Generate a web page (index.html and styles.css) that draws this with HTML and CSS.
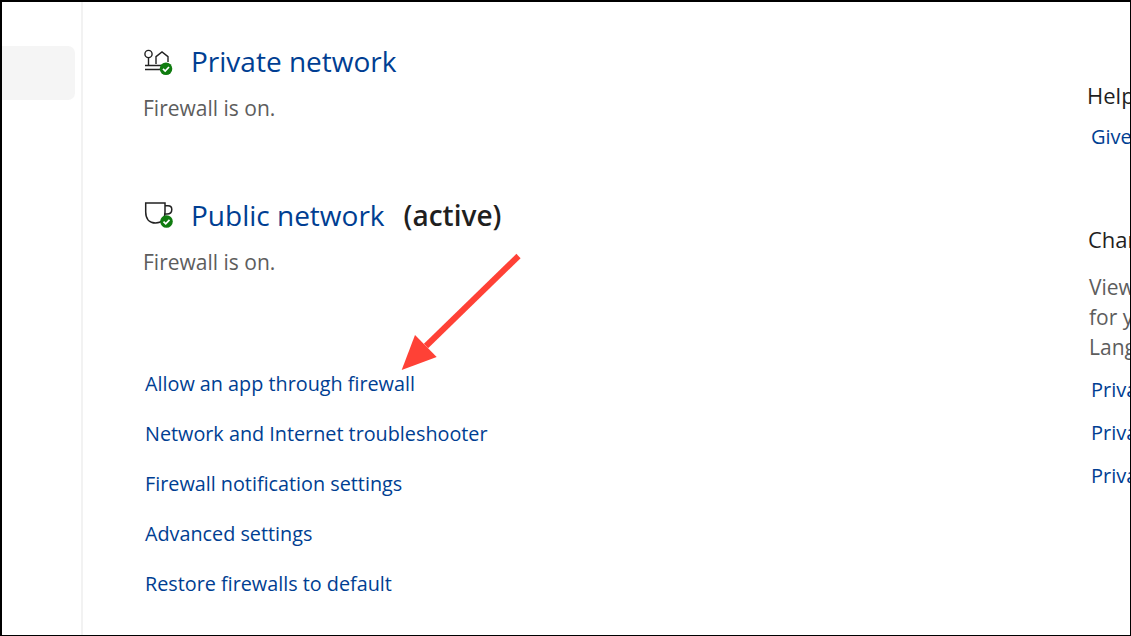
FILE: index.html
```html
<!DOCTYPE html>
<html lang="en">
<head>
<meta charset="utf-8">
<title>Firewall</title>
<link rel="stylesheet" href="styles.css">
</head>
<body>
<div class="frame">
  <aside class="sidebar"><div class="nav-item"></div></aside>
  <main class="main">
    <section class="network">
      <div class="net-head">
        <svg class="net-icon" width="30" height="30" viewBox="0 0 30 30" fill="none" stroke="#222" stroke-width="1.4">
          <circle cx="5.500" cy="8" r="3.600"/>
          <path d="M5.500 11.600V19.500"/>
          <path d="M13 18V10.700L19 6L25 10.700V16"/>
          <path d="M2 19.500H18M2 23.500H17"/>
          <circle cx="23" cy="22.700" r="6.300" fill="#107c10" stroke="none"/>
          <path d="M20 22.800L22.200 25L26 21" stroke="#fff" stroke-width="1.700"/>
        </svg>
        <a class="net-title">Private network</a>
      </div>
      <p class="status">Firewall is on.</p>
    </section>
    <section class="network">
      <div class="net-head">
        <svg class="net-icon" width="30" height="30" viewBox="0 0 30 30" fill="none" stroke="#222" stroke-width="1.500">
          <path d="M2.700 3H22V12C22 19 18.500 23 12.500 23C6.500 23 2.700 19 2.700 12Z"/>
          <path d="M22 5.800H25C27.500 5.800 28.800 7.300 28.800 9.500C28.800 12 27 14 24 14H21.500"/>
          <circle cx="23.500" cy="21.500" r="6.300" fill="#107c10" stroke="none"/>
          <path d="M20.500 21.600L22.700 23.800L26.500 19.800" stroke="#fff" stroke-width="1.700"/>
        </svg>
        <a class="net-title">Public network</a>
        <span class="active">(active)</span>
      </div>
      <p class="status">Firewall is on.</p>
    </section>
    <nav class="links">
      <a>Allow an app through firewall</a>
      <a>Network and Internet troubleshooter</a>
      <a>Firewall notification settings</a>
      <a>Advanced settings</a>
      <a>Restore firewalls to default</a>
    </nav>
  </main>
  <aside class="side">
    <h2 class="side-title help">Help from the web</h2>
    <a class="side-link give">Give feedback</a>
    <h2 class="side-title change">Change your privacy settings</h2>
    <p class="side-text">View and change privacy settings<br>for your Windows 11 device<br>Language settings</p>
    <a class="side-link">Privacy settings</a>
    <a class="side-link">Privacy dashboard</a>
    <a class="side-link">Privacy statement</a>
  </aside>
  <svg class="arrow" width="130" height="125" viewBox="0 0 130 125">
    <path d="M118.500 4L26 94" stroke="#ff4136" stroke-width="6" fill="none"/>
    <path d="M1.700 118L15 83L36.700 105Z" fill="#ff4136" stroke="none"/>
  </svg>
</div>
</body>
</html>
```
FILE: styles.css
```css
* { box-sizing: border-box; }
html, body { margin: 0; height: 100%; background: #fff; }
body { font-family: "Open Sans", "Noto Sans", sans-serif; overflow: hidden; }
.frame {
  position: relative;
  width: 1131px;
  height: 636px;
  display: flex;
  overflow: hidden;
  border-top: 2px solid #000;
  border-left: 2px solid #000;
  border-right: 1px solid #000;
  border-bottom: 1px solid #000;
}
.sidebar {
  width: 81px;
  flex: none;
  padding-top: 44px;
  border-right: 2px solid #f2f2f2;
}
.nav-item {
  width: 73px;
  height: 54px;
  background: #f5f5f5;
  border-radius: 0 7px 7px 0;
}
.main { width: 1004px; flex: none; padding: 37px 0 0 60px; }
.network { margin-bottom: 70px; }
.net-head { display: flex; align-items: center; height: 44px; }
.net-icon { flex: none; margin-right: 18px; }
.net-title { font-size: 28px; color: #003e92; }
.active { font-size: 28px; font-weight: 600; color: #1f1f1f; margin-left: 19px; }
.status { margin: 10px 0 0; font-size: 21px; line-height: 30px; color: #5d5d5d; }
.links { display: flex; flex-direction: column; gap: 20px; margin-top: 92px; padding-left: 2px; }
.links a { font-size: 19.8px; line-height: 30px; color: #003e92; }
.side { flex: none; width: 300px; padding-top: 78px; white-space: nowrap; }
.side-title { margin: 0; font-size: 22px; font-weight: 400; line-height: 30px; color: #1f1f1f; }
.side-link { display: block; font-size: 20px; line-height: 30px; margin-left: 4px; margin-bottom: 13px; color: #003e92; }
.give { margin-top: 12px; }
.change { margin-top: 72px; margin-left: 1px; }
.side-text { margin: 18px 0 13px 2px; font-size: 21px; line-height: 30px; color: #5d5d5d; }
.arrow { position: absolute; left: 398px; top: 250px; }
```
